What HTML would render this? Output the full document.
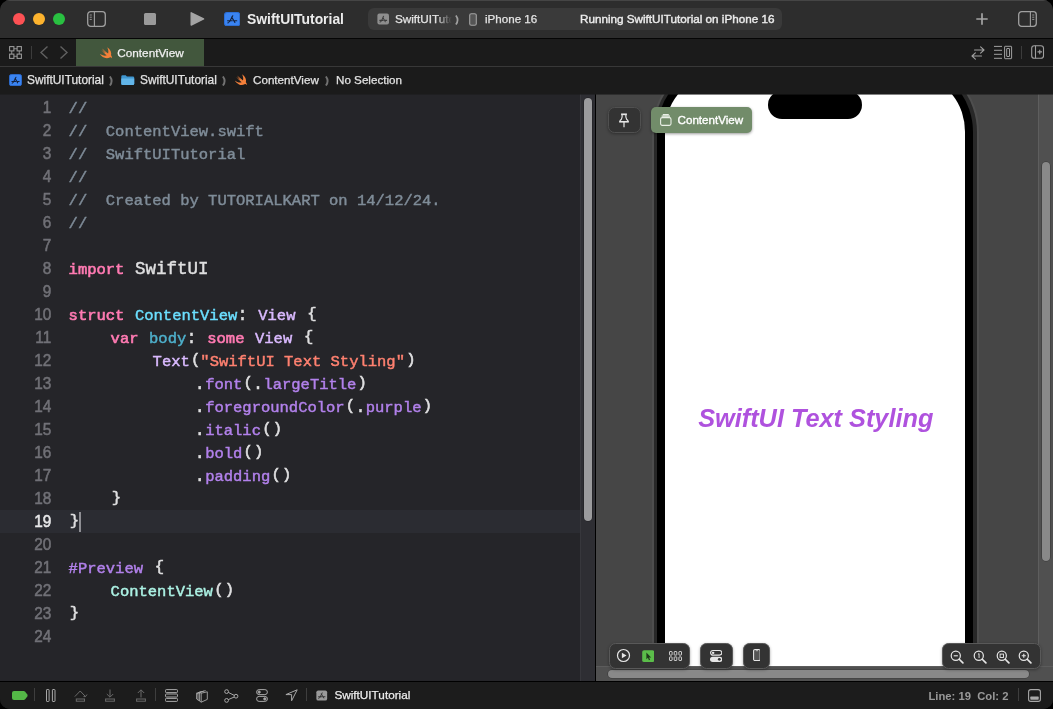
<!DOCTYPE html>
<html>
<head>
<meta charset="utf-8">
<title>Xcode</title>
<style>
*{box-sizing:border-box;margin:0;padding:0}
html,body{width:1053px;height:709px;overflow:hidden;background:#000;}
body{font-family:"Liberation Sans",sans-serif;color:#dfdfe0}
.win{will-change:transform;position:absolute;left:0;top:0;width:1053px;height:709px;border-radius:10px;overflow:hidden;background:#1e1e1e}
.abs{position:absolute}
.m5{-webkit-text-stroke:0.25px currentColor}
/* title bar */
.titlebar{position:absolute;left:0;top:0;width:1053px;height:38px;background:#2d2d2d;box-shadow:inset 0 1px 0 #454545}
.tl{position:absolute;top:13px;width:12px;height:12px;border-radius:50%}
.title{position:absolute;left:247px;top:11px;font-weight:bold;font-size:13.9px;color:#ececec;line-height:16px;white-space:nowrap}
.pill{position:absolute;left:368px;top:8px;width:414px;height:22px;border-radius:6px;background:#3a3a3a}
.pill span{position:absolute;top:4px;font-size:11.7px;line-height:14px;color:#e4e4e4;white-space:nowrap}
/* tab bar */
.tabbar{position:absolute;left:0;top:39px;width:1053px;height:27px;background:#1b1b1b}
.tab{position:absolute;left:76px;top:0;width:128.2px;height:27px;background:#42573d}
.tab span{position:absolute;left:41.3px;top:7px;font-size:11.75px;line-height:14px;color:#f0f0f0;-webkit-text-stroke:0.25px currentColor}
/* crumbs */
.crumbs{position:absolute;left:0;top:66px;width:1053px;height:28px;background:#1b1b1b;border-top:1px solid #383838}
.crumbs span{position:absolute;top:6px;font-size:11.9px;line-height:14px;color:#e2e2e2;white-space:nowrap;-webkit-text-stroke:0.25px currentColor}
/* editor */
.editor{position:absolute;left:0;top:94px;width:580px;height:587px;background:#252529}
.hl{position:absolute;left:0;top:415.5px;width:580px;height:23px;background:#2b2c32}
.ln{position:absolute;left:0;width:51.3px;text-align:right;font-family:"Liberation Sans",sans-serif;font-size:16.5px;line-height:23px;color:#717177;height:23px;-webkit-text-stroke:0.55px currentColor;transform:scaleX(0.93);transform-origin:100% 50%}
.cl{position:absolute;left:68.6px;font-family:"Liberation Mono",monospace;font-size:17.5px;line-height:23px;height:23px;white-space:pre;color:#dfdfe0;-webkit-text-stroke:0.45px currentColor}
.cl span{font-size:15.5px;-webkit-text-stroke:0.45px currentColor}
.cl .b{font-size:15.5px;letter-spacing:1.2px;margin-left:1.2px;margin-right:-1.2px;position:relative;top:-1.4px;-webkit-text-stroke:0.6px currentColor}
.c{color:#7f8c98}
.cl .k{color:#ff7ab2;-webkit-text-stroke:0.65px currentColor}
.t{color:#6bdfff}
.o{color:#4eb0cc}
.s{color:#ff8170}
.p{color:#dabaff}
.f{color:#b281eb}
.m{color:#acf2e4}
.escroll{position:absolute;left:580px;top:94px;width:15px;height:587px;background:#2e2e33;border-left:1px solid #37373c}
.ethumb{position:absolute;left:3px;top:3.5px;width:8px;height:423.4px;border-radius:4px;background:#9b9b9d;box-shadow:0 0 0 0.6px rgba(20,20,22,.5)}
.vdiv{position:absolute;left:595px;top:94px;width:1px;height:587px;background:#000}
/* preview */
.preview{position:absolute;left:596px;top:94px;width:457px;height:587px;background:#464646;overflow:hidden}
.phone{position:absolute;left:55.6px;top:-28.3px;width:327.4px;height:760px;border-radius:56.2px / 66.2px;background:#282828;border:2.2px solid #4e4e4e}
.bezel{position:absolute;left:61.4px;top:-22.4px;width:315.7px;height:750px;border-radius:50.3px / 60.3px;background:#000}
.screen{position:absolute;left:69px;top:-14.1px;width:299.8px;height:734px;border-radius:42px / 52px;background:#fff}
.island{position:absolute;left:172px;top:-3px;width:94px;height:28px;border-radius:14px;background:#000}
.ptext{position:absolute;left:102.2px;top:308px;font:bold italic 25.3px/32px "Liberation Sans",sans-serif;color:#af52de;white-space:nowrap}
.pbtn{position:absolute;height:25.8px;border-radius:6.5px;background:#333333;border:1px solid #595959;box-shadow:0 1px 3px rgba(0,0,0,.35)}
.chip{position:absolute;left:55.4px;top:13px;width:100.6px;height:25.6px;border-radius:5px;background:#728c6a;box-shadow:0 1px 3px rgba(0,0,0,.4)}
.chip span{position:absolute;left:26.2px;top:6.3px;font-size:11.6px;line-height:14px;color:#fff;-webkit-text-stroke:0.35px #fff}
.vscroll{position:absolute;left:442px;top:0;width:15px;height:572px;background:#505050;border-left:1px solid #5e5e5e}
.hscroll{position:absolute;left:0;top:572px;width:457px;height:15px;background:#505050;border-top:1px solid #5c5c5c}
/* bottom bar */
.bottombar{position:absolute;left:0;top:681px;width:1053px;height:28px;background:#1c1c1c;box-shadow:inset 0 1px 0 #000}
.bottombar span{position:absolute;white-space:nowrap}
.seam{position:absolute;left:0;top:94px;width:1053px;height:1px;background:rgba(27,27,27,.55);z-index:5}
</style>
</head>
<body>
<div class="win">
<div class="titlebar"><div class="tl" style="left:13px;background:#fd5154"></div><div class="tl" style="left:33px;background:#fdb32e"></div><div class="tl" style="left:53px;background:#29c041"></div><svg class="abs" style="left:87px;top:11px" width="19" height="16" viewBox="0 0 19 16"><rect x="0.700" y="0.700" width="17.600" height="14.600" rx="3" fill="none" stroke="#a0a0a0" stroke-width="1.300"/><path d="M7.400 0.700V15.300" stroke="#a0a0a0" stroke-width="1.100"/><path d="M2.700 4H4.800M2.700 6.200H4.800M2.700 8.400H4.800" stroke="#a0a0a0" stroke-width="0.900"/></svg><div class="abs" style="left:144px;top:13px;width:12px;height:12px;border-radius:1.5px;background:#9a9a9a"></div><svg class="abs" style="left:189px;top:10px" width="17" height="17" viewBox="0 0 17 17"><path d="M2.200 2.800 L14.600 8.900 L2.200 15Z" fill="#a4a4a4" stroke="#a4a4a4" stroke-width="1.400" stroke-linejoin="round"/></svg><svg class="abs" style="left:223.8px;top:11.8px" width="16.3" height="14.3" viewBox="0 0 16 14" preserveAspectRatio="none"><rect x="0.5" y="0.5" width="15" height="13" rx="2.5" fill="#3a84f2" stroke="#2c6fd8" stroke-width="1"/><path d="M8.6 3.7 L5.4 9.5 M7.5 5 L10.7 10.200 M3.500 8.600 H8.100 M9.700 8.600 H12.500" fill="none" stroke="#15233f" stroke-width="1.1" stroke-linecap="round"/><path d="M3.900 10.700 L4.300 10.000" stroke="#15233f" stroke-width="1.1" stroke-linecap="round"/></svg><div class="title">SwiftUITutorial</div><div class="pill"><svg class="abs" style="left:8.7px;top:5px" width="12.4" height="12" viewBox="0 0 16 14" preserveAspectRatio="none"><rect x="0.5" y="0.5" width="15" height="13" rx="2.5" fill="#8e8e8e"/><path d="M8.6 3.7 L5.4 9.5 M7.5 5 L10.7 10.200 M3.500 8.600 H8.100 M9.700 8.600 H12.500" fill="none" stroke="#3c3c3c" stroke-width="1.2" stroke-linecap="round"/><path d="M3.900 10.700 L4.300 10.000" stroke="#3c3c3c" stroke-width="1.2" stroke-linecap="round"/></svg><span class="m5" style="left:27px;-webkit-mask-image:linear-gradient(90deg,#000 72%,transparent 98%);width:58px;overflow:hidden">SwiftUITuto</span><svg class="abs" style="left:87px;top:6.5px" width="5" height="10" viewBox="0 0 5 10"><path d="M0.900 0.500 Q4.300 5 0.900 9.500" fill="none" stroke="#a0a0a0" stroke-width="1.7" stroke-linecap="butt"/></svg><svg class="abs" style="left:101px;top:5px" width="8" height="13" viewBox="0 0 8 13"><rect x="0.700" y="0.700" width="6.600" height="11.600" rx="1.600" fill="#555" stroke="#a2a2a2" stroke-width="1.100"/></svg><span class="m5" style="left:117px;font-size:11.600px">iPhone 16</span><span style="left:212px;color:#ececec;-webkit-text-stroke:0.4px #ececec">Running SwiftUITutorial on iPhone 16</span></div><svg class="abs" style="left:976px;top:13px" width="12" height="12" viewBox="0 0 12 12"><path d="M6 0.300V11.700M0.300 6H11.700" stroke="#a4a4a4" stroke-width="1.700"/></svg><svg class="abs" style="left:1018px;top:11px" width="19" height="16" viewBox="0 0 19 16"><rect x="0.700" y="0.700" width="17.600" height="14.600" rx="3" fill="none" stroke="#a0a0a0" stroke-width="1.300"/><path d="M12.400 0.700V15.300" stroke="#a0a0a0" stroke-width="1.100"/><path d="M14.200 4H16.300M14.200 6.200H16.300M14.200 8.400H16.300" stroke="#a0a0a0" stroke-width="0.900"/></svg></div><div class="abs" style="left:0;top:38px;width:1053px;height:1px;background:#050505"></div>
<div class="tabbar"><svg class="abs" style="left:9px;top:7px" width="13" height="13" viewBox="0 0 13 13" fill="none" stroke="#9c9c9c" stroke-width="1.050"><rect x="0.600" y="0.600" width="4.300" height="4.300"/><rect x="8.100" y="0.600" width="4.300" height="4.300"/><rect x="0.600" y="8.100" width="4.300" height="4.300"/><rect x="8.100" y="8.100" width="4.300" height="4.300"/><path d="M4.900 2.750H8.100M2.750 4.900V8.100M4.900 10.250H8.100M10.250 4.900V8.100" stroke-width="0.900"/></svg><div class="abs" style="left:31px;top:7px;width:1px;height:13px;background:#3c3c3c"></div><svg class="abs" style="left:39px;top:6px" width="10" height="15" viewBox="0 0 10 15"><path d="M8.500 1.500L2 7.500L8.500 13.500" fill="none" stroke="#606060" stroke-width="1.400"/></svg><svg class="abs" style="left:59px;top:6px" width="10" height="15" viewBox="0 0 10 15"><path d="M1.500 1.500L8 7.500L1.500 13.500" fill="none" stroke="#606060" stroke-width="1.400"/></svg><div class="tab"><svg class="abs" style="left:22.8px;top:6.6px" width="14.6" height="14.6" viewBox="0 0 24 24"><path fill="#f5803a" d="M13.5 2.2c5.2 3.5 7.6 9 6.3 13.1 1.6 2 1.9 4 1.7 5.2-0.900-1.700-2.500-2.400-3.900-1.700-2.300 1.300-5.800 1.700-9.200 0.200C5.400 17.800 3 15.500 1.300 12.700c1.200 0.900 2.600 1.700 4.100 2.300 2.800 1.200 5.400 1.300 7.300 0.400C9.700 13.100 6.500 9.800 3.700 6.300c2.300 2.100 6 4.900 7.500 5.700C9.100 9.800 6.500 6.600 5.200 4.300c2.700 2.700 6.900 6.300 9.800 8 0.900-2.500 0.300-6.400-1.500-10.100z"/></svg><span>ContentView</span></div><svg class="abs" style="left:970.800px;top:6.500px" width="14" height="14" viewBox="0 0 14 14" fill="none" stroke="#a0a0a0" stroke-width="1.100" stroke-linecap="round" stroke-linejoin="round"><path d="M3.500 4H13M9.600 0.800L13 4L9.600 7.200M10.500 10H1M4.400 6.800L1 10L4.400 13.200"/></svg><svg class="abs" style="left:994px;top:6px" width="19" height="15" viewBox="0 0 19 15" fill="none" stroke="#a0a0a0" stroke-width="1"><path d="M0 1.400H8M0 5.300H8M0 9.300H8M0 13.300H8"/><rect x="10.600" y="1.300" width="7" height="12.400" rx="0.500"/><rect x="12.700" y="3.500" width="2.800" height="8" rx="0.300"/></svg><div class="abs" style="left:1021px;top:7px;width:1px;height:13px;background:#3c3c3c"></div><svg class="abs" style="left:1030.500px;top:6.400px" width="14" height="14" viewBox="0 0 14 14" fill="none" stroke="#a0a0a0" stroke-width="1.100"><rect x="0.700" y="0.700" width="11.800" height="12.600" rx="2.600"/><path d="M4.500 0.700V13.300M6.500 6.900H11M8.750 4.650V9.150"/></svg></div>
<div class="crumbs"><svg class="abs" style="left:9px;top:6.7px" width="13" height="12.2" viewBox="0 0 16 14" preserveAspectRatio="none"><rect x="0.5" y="0.5" width="15" height="13" rx="2.5" fill="#3a84f2" stroke="#2c6fd8" stroke-width="1"/><path d="M8.6 3.7 L5.4 9.5 M7.5 5 L10.7 10.200 M3.500 8.600 H8.100 M9.700 8.600 H12.500" fill="none" stroke="#15233f" stroke-width="1.2" stroke-linecap="round"/><path d="M3.900 10.700 L4.300 10.000" stroke="#15233f" stroke-width="1.2" stroke-linecap="round"/></svg><span style="left:27px">SwiftUITutorial</span><svg class="abs" style="left:108.5px;top:9px" width="5" height="10" viewBox="0 0 5 10"><path d="M0.900 0.500 Q4.300 5 0.900 9.500" fill="none" stroke="#727272" stroke-width="1.9" stroke-linecap="butt"/></svg><svg class="abs" style="left:121px;top:7.800px" width="13.500" height="10.200" viewBox="0 0 15 12" preserveAspectRatio="none"><path d="M0.300 1.800Q0.300 0.300 1.800 0.300H5.200L6.600 1.800H13.200Q14.700 1.800 14.700 3.300V10.200Q14.700 11.700 13.200 11.700H1.800Q0.300 11.700 0.300 10.200Z" fill="#3f96d0"/><path d="M0.300 4.200H14.700V10.200Q14.700 11.700 13.200 11.700H1.800Q0.300 11.700 0.300 10.200Z" fill="#62b5e8"/></svg><span style="left:140px">SwiftUITutorial</span><svg class="abs" style="left:221.5px;top:9px" width="5" height="10" viewBox="0 0 5 10"><path d="M0.900 0.500 Q4.300 5 0.900 9.500" fill="none" stroke="#727272" stroke-width="1.9" stroke-linecap="butt"/></svg><svg class="abs" style="left:234.1px;top:6px" width="14.4" height="14.4" viewBox="0 0 24 24"><path fill="#f5803a" d="M13.5 2.2c5.2 3.5 7.6 9 6.3 13.1 1.6 2 1.9 4 1.7 5.2-0.900-1.700-2.500-2.400-3.900-1.700-2.300 1.300-5.800 1.700-9.200 0.200C5.400 17.800 3 15.500 1.300 12.700c1.200 0.900 2.600 1.700 4.100 2.300 2.800 1.200 5.400 1.300 7.300 0.400C9.700 13.100 6.500 9.800 3.700 6.300c2.300 2.100 6 4.900 7.500 5.700C9.100 9.800 6.500 6.600 5.200 4.300c2.700 2.700 6.900 6.300 9.800 8 0.900-2.500 0.300-6.400-1.500-10.100z"/></svg><span style="left:253px;font-size:11.650px">ContentView</span><svg class="abs" style="left:324.5px;top:9px" width="5" height="10" viewBox="0 0 5 10"><path d="M0.900 0.500 Q4.300 5 0.900 9.500" fill="none" stroke="#727272" stroke-width="1.9" stroke-linecap="butt"/></svg><span style="left:336px;font-size:11.650px">No Selection</span></div>
<div class="editor">
<div class="hl"></div>
<div class="ln" style="top:1.5px">1</div>
<div class="cl" style="top:2.5px"><span class="c">//</span></div>
<div class="ln" style="top:24.5px">2</div>
<div class="cl" style="top:25.5px"><span class="c">//  ContentView.swift</span></div>
<div class="ln" style="top:47.5px">3</div>
<div class="cl" style="top:48.5px"><span class="c">//  SwiftUITutorial</span></div>
<div class="ln" style="top:70.5px">4</div>
<div class="cl" style="top:71.5px"><span class="c">//</span></div>
<div class="ln" style="top:93.5px">5</div>
<div class="cl" style="top:94.5px"><span class="c">//  Created by TUTORIALKART on 14/12/24.</span></div>
<div class="ln" style="top:116.5px">6</div>
<div class="cl" style="top:117.5px"><span class="c">//</span></div>
<div class="ln" style="top:139.5px">7</div>
<div class="ln" style="top:162.5px">8</div>
<div class="cl" style="top:163.5px"><span class="k">import</span> SwiftUI</div>
<div class="ln" style="top:185.5px">9</div>
<div class="ln" style="top:208.5px">10</div>
<div class="cl" style="top:209.5px"><span class="k">struct</span> <span class="t">ContentView</span>: <span class="p">View</span> <span class="b">{</span></div>
<div class="ln" style="top:231.5px">11</div>
<div class="cl" style="top:232.5px">    <span class="k">var</span> <span class="o">body</span>: <span class="k">some</span> <span class="p">View</span> <span class="b">{</span></div>
<div class="ln" style="top:254.5px">12</div>
<div class="cl" style="top:255.5px">        <span class="p">Text</span><span class="b">(</span><span class="s">"SwiftUI Text Styling"</span><span class="b">)</span></div>
<div class="ln" style="top:277.5px">13</div>
<div class="cl" style="top:278.5px">            .<span class="f">font</span><span class="b">(</span>.<span class="f">largeTitle</span><span class="b">)</span></div>
<div class="ln" style="top:300.5px">14</div>
<div class="cl" style="top:301.5px">            .<span class="f">foregroundColor</span><span class="b">(</span>.<span class="f">purple</span><span class="b">)</span></div>
<div class="ln" style="top:323.5px">15</div>
<div class="cl" style="top:324.5px">            .<span class="f">italic</span><span class="b">()</span></div>
<div class="ln" style="top:346.5px">16</div>
<div class="cl" style="top:347.5px">            .<span class="f">bold</span><span class="b">()</span></div>
<div class="ln" style="top:369.5px">17</div>
<div class="cl" style="top:370.5px">            .<span class="f">padding</span><span class="b">()</span></div>
<div class="ln" style="top:392.5px">18</div>
<div class="cl" style="top:393.5px">    <span class="b">}</span></div>
<div class="ln" style="top:415.5px;color:#e8e8ea">19</div>
<div class="cl" style="top:416.5px"><span class="b">}</span></div>
<div class="ln" style="top:438.5px">20</div>
<div class="ln" style="top:461.5px">21</div>
<div class="cl" style="top:462.5px"><span class="f">#Preview</span> <span class="b">{</span></div>
<div class="ln" style="top:484.5px">22</div>
<div class="cl" style="top:485.5px">    <span class="m">ContentView</span><span class="b">()</span></div>
<div class="ln" style="top:507.5px">23</div>
<div class="cl" style="top:508.5px"><span class="b">}</span></div>
<div class="ln" style="top:530.5px">24</div>
<div class="abs" style="left:79.200px;top:418px;width:1.800px;height:19.500px;background:#8e8e93"></div>
</div>
<div class="escroll"><div class="ethumb"></div></div><div class="vdiv"></div>
<div class="preview"><div class="phone"></div><div class="bezel"></div><div class="screen"></div><div class="island"></div><div class="ptext">SwiftUI Text Styling</div><div class="pbtn" style="left:12.2px;top:13px;width:32.8px;height:25.6px;border-color:#505050"><svg class="abs" style="left:9px;top:4.500px" width="12" height="15" viewBox="0 0 12 15" fill="none" stroke="#e6e6e6" stroke-linejoin="round"><path d="M3.100 1.300H8.900" stroke-width="1.700"/><path d="M4.100 1.600Q4.500 4.600 3.400 6.200Q2 7.400 1.700 8.600M7.900 1.600Q7.500 4.600 8.600 6.200Q10 7.400 10.300 8.600" stroke-width="1.200"/><path d="M1.200 8.800H10.800" stroke-width="1.600"/><path d="M6 9V14.300" stroke-width="1.200"/></svg></div><div class="chip"><svg class="abs" style="left:8.200px;top:7px" width="12" height="12" viewBox="0 0 12 12" fill="none" stroke="#e9efe6" stroke-width="1.100"><path d="M2.800 0.600H8.800M1.600 2.100H10"/><rect x="0.600" y="3.600" width="10.400" height="7.800" rx="1.600"/></svg><span>ContentView</span></div><div class="vscroll"><div class="abs" style="left:3px;top:67.700px;width:8px;height:399.600px;border-radius:4px;background:#898989;box-shadow:0 0 0 0.600px rgba(40,40,40,.550)"></div></div><div class="hscroll"><div class="abs" style="left:12px;top:3px;width:421px;height:8px;border-radius:4px;background:#898989;box-shadow:0 0 0 0.600px rgba(40,40,40,.550)"></div></div><div class="pbtn" style="left:12.600px;top:549.2px;width:81.600px"><svg class="abs" style="left:6.200px;top:4.300px" width="15" height="15" viewBox="0 0 15 15"><circle cx="7.500" cy="7.500" r="6" fill="none" stroke="#e6e6e6" stroke-width="1.200"/><path d="M5.900 4.700L10.500 7.500L5.900 10.300Z" fill="#e6e6e6"/></svg><svg class="abs" style="left:32.300px;top:5.600px" width="12.400" height="12.200" viewBox="0 0 13 13" preserveAspectRatio="none"><rect x="0.200" y="0.200" width="12.600" height="12.600" rx="2" fill="#5bbd4a"/><path d="M4.600 2.600V9.800L6.200 8.300L7.300 10.900L8.500 10.400L7.400 7.900H9.600Z" fill="#1f3a1a"/></svg><svg class="abs" style="left:59px;top:7px" width="13" height="10" viewBox="0 0 13 10" fill="none" stroke="#e6e6e6" stroke-width="0.850"><rect x="0.500" y="0.500" width="2.600" height="3.600" rx="0.500"/><rect x="5.200" y="0.500" width="2.600" height="3.600" rx="0.500"/><rect x="9.900" y="0.500" width="2.600" height="3.600" rx="0.500"/><rect x="0.500" y="5.900" width="2.600" height="3.600" rx="0.500"/><rect x="5.200" y="5.900" width="2.600" height="3.600" rx="0.500"/><rect x="9.900" y="5.900" width="2.600" height="3.600" rx="0.500"/></svg></div><div class="pbtn" style="left:104.400px;top:549.2px;width:32.200px"><svg class="abs" style="left:8.500px;top:6px" width="12.400" height="12" viewBox="0 0 13 13" preserveAspectRatio="none"><rect x="0.600" y="0.600" width="11.800" height="5" rx="2.500" fill="none" stroke="#e6e6e6" stroke-width="1.200"/><circle cx="3.300" cy="3.100" r="1.300" fill="#e6e6e6"/><rect x="0" y="7.200" width="13" height="5.800" rx="2.900" fill="#e6e6e6"/><circle cx="9.800" cy="10.100" r="1.500" fill="#333"/></svg></div><div class="pbtn" style="left:147.300px;top:549.2px;width:26.400px"><svg class="abs" style="left:8.300px;top:4.600px" width="7.800" height="12.200" viewBox="0 0 8 13" preserveAspectRatio="none"><rect x="0.600" y="0.600" width="6.800" height="11.800" rx="1.500" fill="#555" stroke="#e6e6e6" stroke-width="1.100"/><path d="M2.800 1.800H5.200" stroke="#e6e6e6" stroke-width="0.800"/></svg></div><div class="pbtn" style="left:345.900px;top:549.2px;width:99.400px"><svg class="abs" style="left:6.9px;top:5.700px" width="14" height="14" viewBox="0 0 15 15" fill="none" stroke="#e6e6e6"><circle cx="6.200" cy="6.200" r="4.900" stroke-width="1.300"/><path d="M9.900 9.900L13.800 13.800" stroke-width="1.800" stroke-linecap="round"/><path d="M4 6.200H8.400" stroke-width="1.200"/></svg><svg class="abs" style="left:29.9px;top:5.700px" width="14" height="14" viewBox="0 0 15 15" fill="none" stroke="#e6e6e6"><circle cx="6.200" cy="6.200" r="4.900" stroke-width="1.300"/><path d="M9.900 9.900L13.800 13.800" stroke-width="1.800" stroke-linecap="round"/><path d="M5.400 4.600L6.500 3.900V8.600" stroke-width="1"/></svg><svg class="abs" style="left:52.7px;top:5.700px" width="14" height="14" viewBox="0 0 15 15" fill="none" stroke="#e6e6e6"><circle cx="6.200" cy="6.200" r="4.900" stroke-width="1.300"/><path d="M9.900 9.900L13.800 13.800" stroke-width="1.800" stroke-linecap="round"/><rect x="4.400" y="4.400" width="3.600" height="3.600" stroke-width="1"/></svg><svg class="abs" style="left:75.5px;top:5.700px" width="14" height="14" viewBox="0 0 15 15" fill="none" stroke="#e6e6e6"><circle cx="6.200" cy="6.200" r="4.900" stroke-width="1.300"/><path d="M9.900 9.900L13.800 13.800" stroke-width="1.800" stroke-linecap="round"/><path d="M4 6.200H8.400M6.200 4V8.400" stroke-width="1.200"/></svg></div></div>
<div class="bottombar"><svg class="abs" style="left:11.500px;top:9.500px" width="16" height="9" viewBox="0 0 16 9"><path d="M2 0H11.500Q12.500 0 13.200 0.800L15.300 3.600Q15.900 4.500 15.300 5.400L13.200 8.200Q12.500 9 11.500 9H2Q0 9 0 7V2Q0 0 2 0Z" fill="#54b847"/></svg><div class="abs" style="left:34px;top:7px;width:1px;height:13px;background:#3e3e3e"></div><svg class="abs" style="left:46px;top:7.500px" width="10" height="13" viewBox="0 0 10 13" fill="none" stroke="#a8a8a8" stroke-width="1"><rect x="0.500" y="0.500" width="2.600" height="12" rx="0.600"/><rect x="6.400" y="0.500" width="2.600" height="12" rx="0.600"/></svg><svg class="abs" style="left:74px;top:8.500px" width="14" height="12" viewBox="0 0 14 12" fill="none" stroke="#6a6a6a" stroke-width="1"><path d="M0.800 6.600L6.200 1L11.500 6.600H9.500M13 4.500L11.500 6.600"/><rect x="2.300" y="9" width="8.200" height="2.200"/></svg><svg class="abs" style="left:105px;top:7.500px" width="10" height="13" viewBox="0 0 10 13" fill="none" stroke="#6a6a6a" stroke-width="1"><path d="M5 0.500V8M1.800 5L5 8.200L8.200 5"/><rect x="0.600" y="10" width="8.800" height="2.200"/></svg><svg class="abs" style="left:136px;top:7.500px" width="10" height="13" viewBox="0 0 10 13" fill="none" stroke="#6a6a6a" stroke-width="1"><path d="M5 8.500V1M1.800 4L5 0.800L8.200 4"/><rect x="0.600" y="10" width="8.800" height="2.200"/></svg><div class="abs" style="left:155px;top:7px;width:1px;height:13px;background:#3e3e3e"></div><svg class="abs" style="left:165px;top:8px" width="13" height="13" viewBox="0 0 13 13" fill="none" stroke="#a8a8a8" stroke-width="1"><rect x="0.500" y="0.600" width="12" height="3" rx="0.800"/><rect x="0.500" y="5" width="12" height="3" rx="0.800"/><rect x="0.500" y="9.400" width="12" height="3" rx="0.800"/></svg><svg class="abs" style="left:195.500px;top:7.500px" width="12" height="14" viewBox="0 0 12 14" fill="none" stroke="#a8a8a8" stroke-width="0.900" stroke-linejoin="round"><path d="M5.200 4.200L11.300 2.800V10.400L5.200 13.200Z"/><path d="M5.200 4.200L3.600 3.300V12L5.200 13.200M3.600 4.600L2 3.700V11L3.600 12M2 5L0.600 4.200V10L2 11M3.600 3.300L9.600 1.600M2 3.700L7.800 2.100M0.600 4.200L5.800 2.700"/></svg><svg class="abs" style="left:224px;top:7.500px" width="15" height="14" viewBox="0 0 15 14" fill="none" stroke="#a8a8a8" stroke-width="1"><circle cx="2.600" cy="2.600" r="1.900"/><circle cx="2.600" cy="11.400" r="1.900"/><circle cx="12" cy="7.200" r="1.900"/><path d="M4.300 3.400L10.300 6.400M4.300 10.600L10.300 8"/></svg><svg class="abs" style="left:255.500px;top:8px" width="12" height="13" viewBox="0 0 12 13" fill="none" stroke="#a8a8a8" stroke-width="1"><rect x="0.600" y="0.600" width="10.800" height="5" rx="2.500"/><rect x="0.600" y="7.400" width="10.800" height="5" rx="2.500"/><circle cx="3.200" cy="3.100" r="1.100" fill="#a8a8a8"/><circle cx="8.800" cy="9.900" r="1.100" fill="#a8a8a8"/></svg><svg class="abs" style="left:285px;top:8px" width="13" height="13" viewBox="0 0 13 13" fill="none" stroke="#a8a8a8" stroke-width="1" stroke-linejoin="round"><path d="M12.200 0.800L0.900 5.600H6.600V11.800Z"/></svg><div class="abs" style="left:306px;top:7px;width:1px;height:13px;background:#3e3e3e"></div><svg class="abs" style="left:316px;top:8.5px" width="11.5" height="11" viewBox="0 0 16 14" preserveAspectRatio="none"><rect x="0.5" y="0.5" width="15" height="13" rx="2.5" fill="#9a9a9a"/><path d="M8.6 3.7 L5.4 9.5 M7.5 5 L10.7 10.200 M3.500 8.600 H8.100 M9.700 8.600 H12.500" fill="none" stroke="#2e2e2e" stroke-width="1.2" stroke-linecap="round"/><path d="M3.900 10.700 L4.300 10.000" stroke="#2e2e2e" stroke-width="1.2" stroke-linecap="round"/></svg><span class="m5" style="left:334.400px;top:6.500px;font-size:11.750px;line-height:14px;color:#ececec">SwiftUITutorial</span><span style="left:928.400px;top:8px;font-size:11.250px;line-height:14px;color:#999;font-weight:bold;white-space:pre">Line: 19  Col: 2</span><div class="abs" style="left:1018px;top:7px;width:1px;height:13px;background:#3e3e3e"></div><svg class="abs" style="left:1028px;top:8px" width="13" height="13" viewBox="0 0 13 13"><rect x="0.600" y="0.600" width="11.800" height="11.800" rx="2.200" fill="none" stroke="#a8a8a8" stroke-width="1.100"/><rect x="2.300" y="7.600" width="8.400" height="3.100" rx="0.600" fill="#a8a8a8"/></svg></div>
<div class="seam"></div>
</div>
</body>
</html>
